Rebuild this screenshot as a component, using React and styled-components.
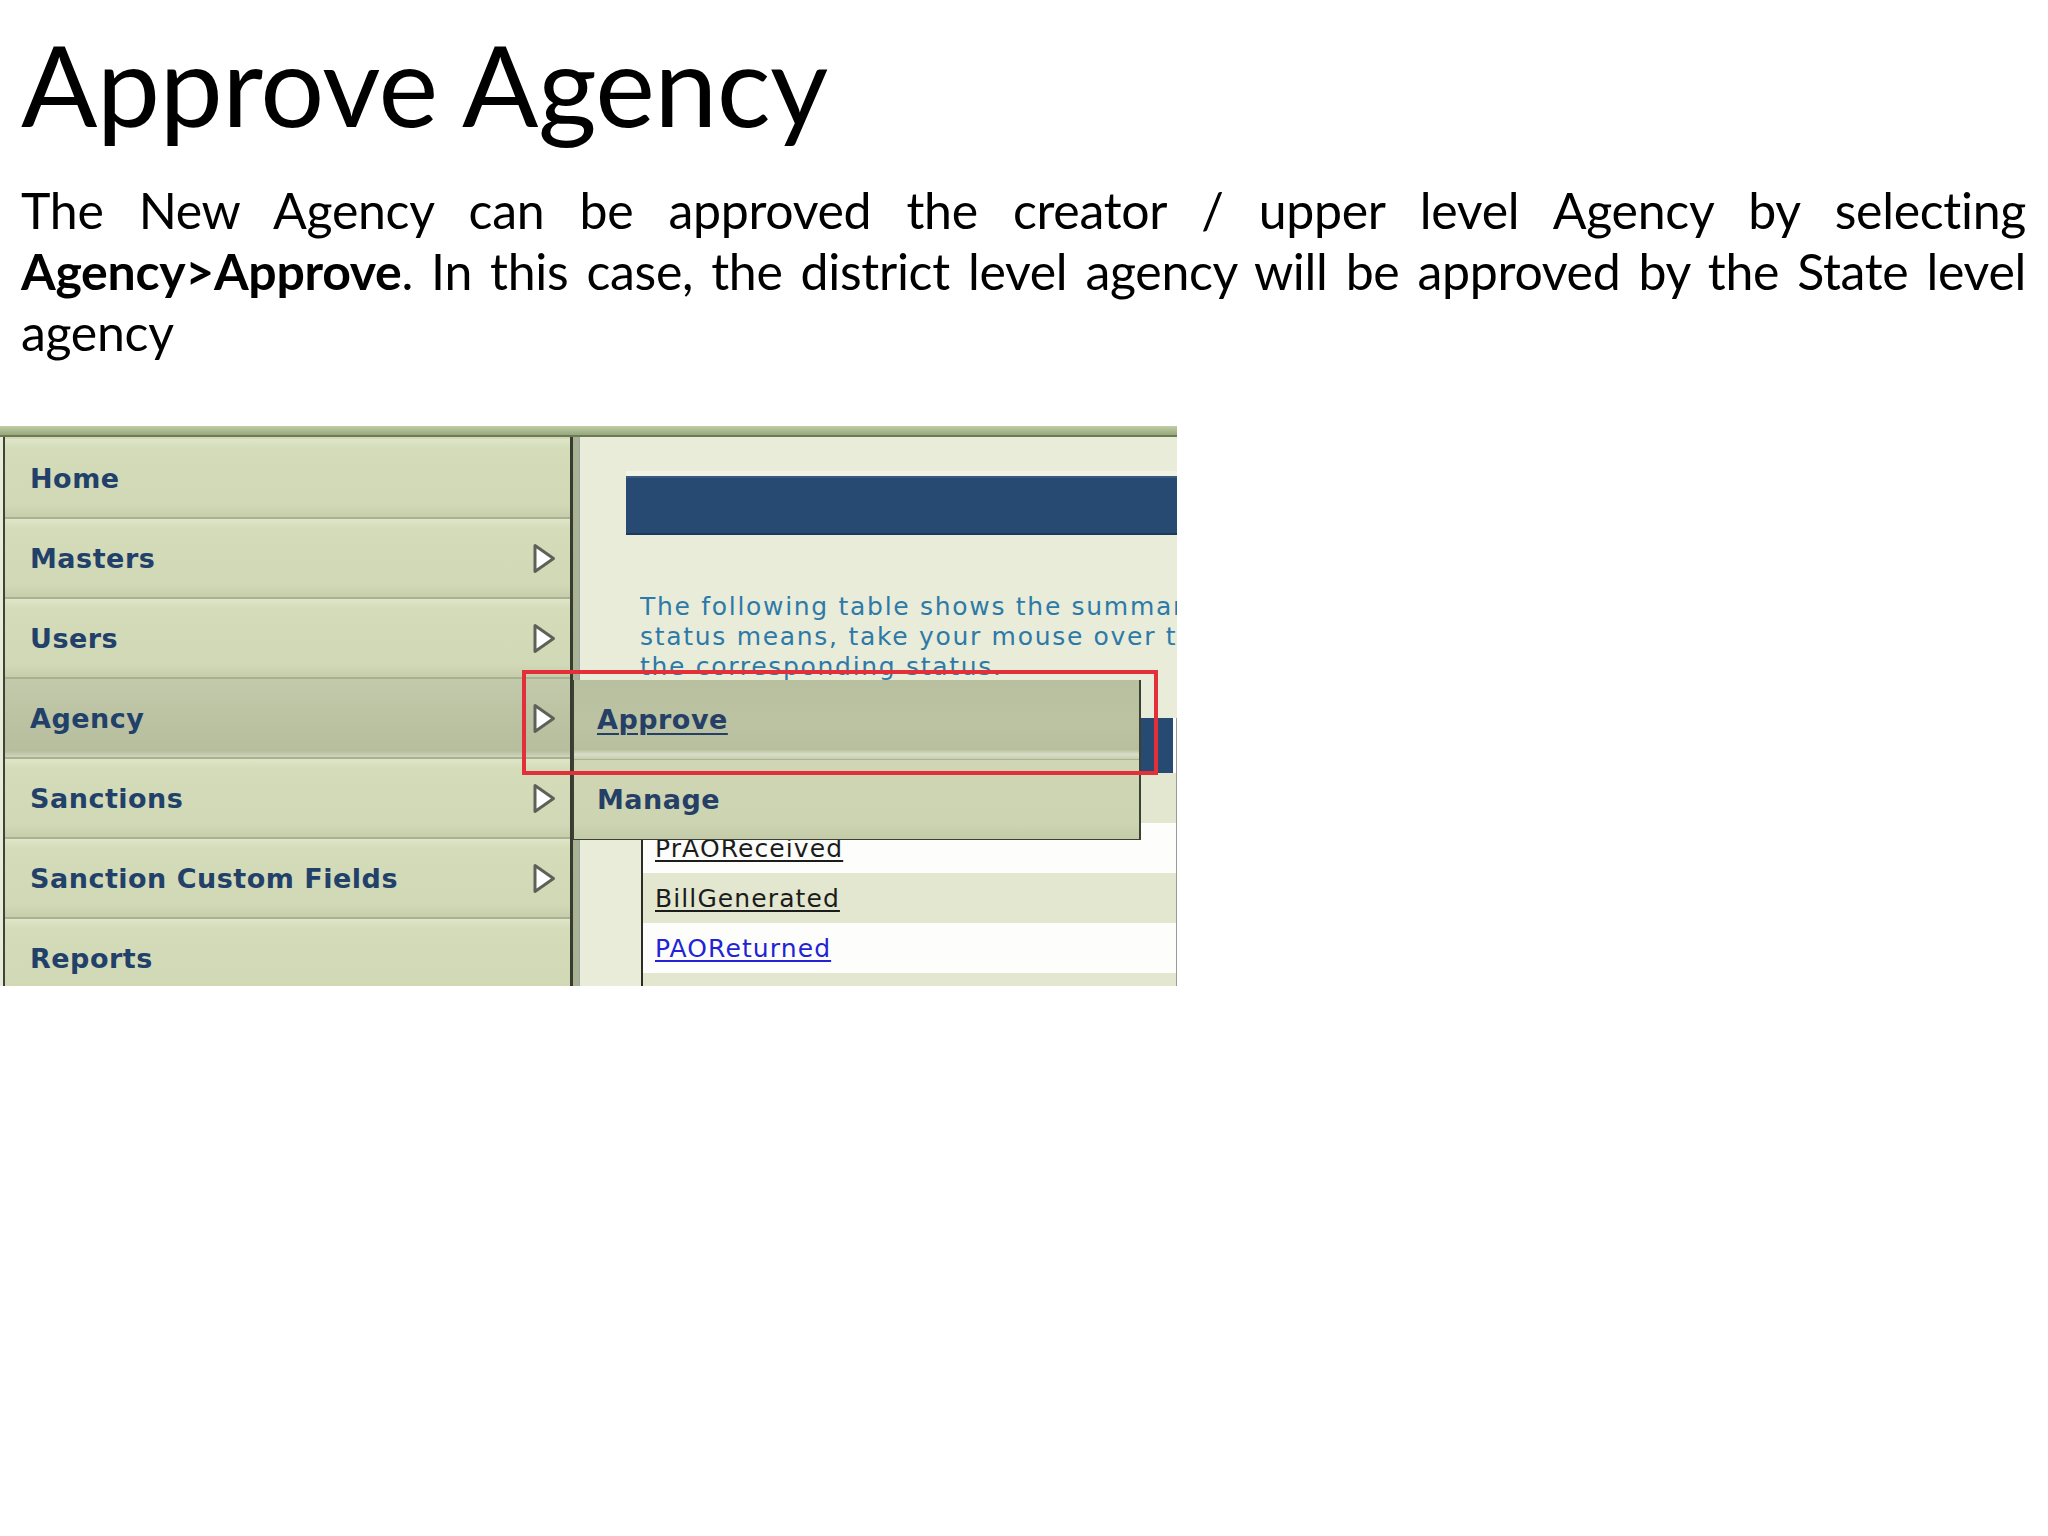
import React from "react";
import styled, { createGlobalStyle } from "styled-components";

const GlobalStyle = createGlobalStyle`
  html, body {
    margin: 0;
    padding: 0;
    background: #ffffff;
  }
  body {
    font-family: Lato, "Liberation Sans", sans-serif;
    color: #000000;
  }
`;

const Slide = styled.main`
  width: 2048px;
  height: 1536px;
  box-sizing: border-box;
  padding: 27px 22px 0 21px;
  background: #ffffff;
  overflow: hidden;
`;

const Title = styled.h1`
  margin: 0;
  font-family: Lato, "Liberation Sans", sans-serif;
  font-weight: 400;
  font-size: 113px;
  line-height: 113px;
  letter-spacing: -0.6px;
  color: #000000;
`;

const Paragraph = styled.div`
  margin-top: 40px;
  font-family: Lato, "Liberation Sans", sans-serif;
  font-size: 50px;
  line-height: 61px;
  letter-spacing: -0.3px;
  color: #000000;
`;

const Line = styled.span`
  display: block;
  white-space: nowrap;
  text-align: justify;
  text-align-last: ${(p) => (p.$last ? "left" : "justify")};
`;

const Shot = styled.section`
  position: relative;
  margin: 63px 0 0 -21px;
  width: 1177px;
  height: 560px;
  overflow: hidden;
  background: #e9ecd9;
  font-family: "DejaVu Sans", Verdana, sans-serif;
`;

const TopBar = styled.div`
  height: 9px;
  background: linear-gradient(to bottom, #c2cda6, #98a87a);
  border-bottom: 2px solid #6d7a58;
`;

const Body = styled.div`
  display: flex;
  height: 549px;
`;

const Menu = styled.nav`
  flex: none;
  width: 565px;
  margin-left: 3px;
  padding-top: 2px;
  border-left: 2px solid #3e4536;
  border-right: 3px solid #363c2f;
  background: #d2d9b6;
`;

const MenuItem = styled.div`
  box-sizing: border-box;
  height: 80px;
  display: flex;
  align-items: center;
  justify-content: space-between;
  padding: 0 14px 0 25px;
  background: ${(p) =>
    p.$active
      ? "linear-gradient(to bottom, #c3caab 0%, #bcc3a3 50%, #b7be9e 92%, #cfd5bb 100%)"
      : "linear-gradient(to bottom, #dfe6c9 0%, #d5dcba 12%, #d1d8b5 85%, #c6cdab 100%)"};
  border-bottom: 2px solid #a9b290;
  color: #22416a;
  font-weight: 700;
  font-size: 27px;
  letter-spacing: 0.5px;
  white-space: nowrap;
`;

const Arrow = () => (
  <svg width="24" height="31" viewBox="0 0 24 31">
    <path
      d="M3 2.5 L21.5 15.5 L3 28.5 Z"
      fill="#ffffff"
      stroke="#5d6259"
      strokeWidth="3"
      strokeLinejoin="round"
    />
  </svg>
);

const Strip = styled.div`
  flex: none;
  width: 6px;
  background: #a9b392;
  border-right: 1px solid #9aa6b8;
`;

const Content = styled.div`
  flex: 1;
  min-width: 0;
  padding-top: 39px;
  background: #e9ecd9;
`;

const BlueBar = styled.div`
  margin-left: 46px;
  height: 59px;
  box-sizing: border-box;
  background: #264a72;
  border-top: 2px solid #3a5b80;
  border-bottom: 2px solid #1d3a5c;
  box-shadow: 0 -5px 0 #f1f3e6;
`;

const Intro = styled.div`
  margin: 57px 0 0 60px;
  color: #2d7aa8;
  font-size: 25px;
  line-height: 30px;
  letter-spacing: 1.7px;
  white-space: nowrap;
  overflow: hidden;
`;

const Table = styled.div`
  margin: 36px 0 0 61px;
  width: 533px;
  border-left: 2px solid #2a2e26;
  border-right: 1px solid #9a9c94;
  background: #ffffff;
`;

const TableHead = styled.div`
  height: 55px;
  margin-right: 3px;
  background: #264a72;
`;

const Row = styled.div`
  height: 50px;
  display: flex;
  align-items: center;
  padding-left: 12px;
  background: ${(p) => (p.$shade ? "#e3e7cf" : "#fdfefb")};
`;

const StatusLink = styled.a`
  font-size: 25px;
  letter-spacing: 1.1px;
  color: ${(p) => (p.$visited ? "#1c1c1c" : "#2323d6")};
  text-decoration: underline;
  text-underline-offset: 3px;
  text-decoration-thickness: 2px;
`;

const SubMenu = styled.div`
  position: absolute;
  left: 572px;
  top: 254px;
  width: 569px;
  height: 160px;
  box-sizing: border-box;
  border: 2px solid #3b4233;
  border-top: none;
  font-weight: 700;
  font-size: 27px;
  letter-spacing: 0.5px;
`;

const SubItem = styled.div`
  height: 79px;
  display: flex;
  align-items: center;
  padding-left: 23px;
  color: #253f66;
  background: ${(p) =>
    p.$active
      ? "linear-gradient(to bottom, #b9c09f 0%, #bcc3a3 55%, #b8bf9e 88%, #d9dec6 94%, #c8cfae 100%)"
      : "linear-gradient(to bottom, #d0d6b5 0%, #cdd4b1 80%, #c4cba8 100%)"};
  border-bottom: ${(p) => (p.$active ? "1px solid #aab293" : "none")};

  span {
    text-decoration: ${(p) => (p.$active ? "underline" : "none")};
    text-underline-offset: 4px;
    text-decoration-thickness: 2px;
  }
`;

const Highlight = styled.div`
  position: absolute;
  left: 522px;
  top: 244px;
  width: 636px;
  height: 105px;
  box-sizing: border-box;
  border: 4px solid #e2303b;
  pointer-events: none;
`;

const menuItems = [
  { label: "Home" },
  { label: "Masters", sub: true },
  { label: "Users", sub: true },
  { label: "Agency", sub: true, active: true },
  { label: "Sanctions", sub: true },
  { label: "Sanction Custom Fields", sub: true },
  { label: "Reports" },
];

const statuses = [
  { label: "SanctionGenerated", visited: true },
  { label: "PrAOReceived", visited: true },
  { label: "BillGenerated", visited: true },
  { label: "PAOReturned" },
  { label: "PAOApproved" },
];

export default function App() {
  return (
    <>
      <GlobalStyle />
      <Slide>
        <Title>Approve Agency</Title>
        <Paragraph>
          <Line>
            The New Agency can be approved the creator / upper level Agency by
            selecting
          </Line>
          <Line>
            <b>Agency&gt;Approve</b>. In this case, the district level agency
            will be approved by the State level
          </Line>
          <Line $last>agency</Line>
        </Paragraph>

        <Shot>
          <TopBar />
          <Body>
            <Menu>
              {menuItems.map((item) => (
                <MenuItem key={item.label} $active={item.active}>
                  <span>{item.label}</span>
                  {item.sub && <Arrow />}
                </MenuItem>
              ))}
            </Menu>
            <Strip />
            <Content>
              <BlueBar />
              <Intro>
                <div>
                  The following table shows the summary of sanctions. To know
                  what each
                </div>
                <div>
                  status means, take your mouse over the status link to see
                  the help for
                </div>
                <div>the corresponding status.</div>
              </Intro>
              <Table>
                <TableHead />
                {statuses.map((s, i) => (
                  <Row key={s.label} $shade={i % 2 === 0}>
                    <StatusLink href="#" $visited={s.visited}>
                      {s.label}
                    </StatusLink>
                  </Row>
                ))}
              </Table>
            </Content>
          </Body>

          <SubMenu>
            <SubItem $active>
              <span>Approve</span>
            </SubItem>
            <SubItem>
              <span>Manage</span>
            </SubItem>
          </SubMenu>
          <Highlight />
        </Shot>
      </Slide>
    </>
  );
}
